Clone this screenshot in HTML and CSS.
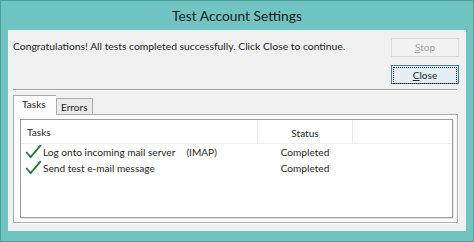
FILE: index.html
```html
<!DOCTYPE html>
<html>
<head>
<meta charset="utf-8">
<link rel="stylesheet" href="styles.css">
</head>
<body>
<div class="window">
  <div class="titlebar">Test Account Settings</div>
  <div class="client">
    <div class="top">
      <div class="message">Congratulations! All tests completed successfully. Click Close to continue.</div>
      <div class="buttons">
        <div class="btn disabled"><u>S</u>top</div>
        <div class="btn default"><span class="focus"><u>C</u>lose</span></div>
      </div>
    </div>
    <div class="separator"></div>
    <div class="tabs">
      <div class="tab selected">Tasks</div>
      <div class="tab">Errors</div>
    </div>
    <div class="panel">
      <div class="list">
        <div class="header">
          <div class="col c1">Tasks</div>
          <div class="col c2">Status</div>
          <div class="col c3"></div>
        </div>
        <div class="row">
          <div class="col c1">
            <svg class="check" width="17" height="15" viewBox="0 0 17 15"><path d="M1.2 8 L5.6 13.2 L15.8 1.2" fill="none" stroke="#27792f" stroke-width="1.8" stroke-linejoin="miter"/></svg>
            <span>Log onto incoming mail server</span><span class="proto">(IMAP)</span>
          </div>
          <div class="col c2">Completed</div>
        </div>
        <div class="row">
          <div class="col c1">
            <svg class="check" width="17" height="15" viewBox="0 0 17 15"><path d="M1.2 8 L5.6 13.2 L15.8 1.2" fill="none" stroke="#27792f" stroke-width="1.8" stroke-linejoin="miter"/></svg>
            <span>Send test e-mail message</span>
          </div>
          <div class="col c2">Completed</div>
        </div>
      </div>
    </div>
  </div>
</div>
</body>
</html>
```
FILE: styles.css
```css
html, body {
  margin: 0;
  padding: 0;
}
body {
  width: 474px;
  height: 242px;
  overflow: hidden;
  font-family: "Lato", "Noto Sans", sans-serif;
  font-size: 10.1px;
  color: #1e1e1e;
}
.window {
  box-sizing: border-box;
  width: 474px;
  height: 242px;
  background: #70c5c2;
  border: 1px solid #4f9e9b;
  padding: 0 7px 10px 7px;
  display: flex;
  flex-direction: column;
}
.titlebar {
  height: 29px;
  line-height: 30px;
  text-align: center;
  font-size: 13.8px;
  color: #1a1a1a;
}
.client {
  flex: 1;
  background: #f0f0f0;
  display: flex;
  flex-direction: column;
  padding: 0 0 0 5px;
}
.top {
  display: flex;
  justify-content: space-between;
  height: 58px;
}
.message {
  margin-top: 8px;
  line-height: 16px;
  font-size: 10.35px;
}
.buttons {
  margin-top: 8px;
  margin-right: 7px;
  display: flex;
  flex-direction: column;
  gap: 8px;
}
.btn {
  box-sizing: border-box;
  width: 68px;
  height: 19px;
  border: 1px solid #acacac;
  background: #e9e9e9;
  text-align: center;
  line-height: 17px;
  padding: 0;
}
.btn.disabled {
  color: #a3a3a3;
  border-color: #d9d9d9;
  background: #f2f2f2;
}
.btn.default {
  border-color: #3c7fb1;
  background: #e5eef6;
  padding: 1px;
}
.focus {
  display: block;
  height: 15px;
  line-height: 15px;
  border: 1px dotted #222;
  box-sizing: content-box;
  margin: 0;
}
.separator {
  height: 1px;
  background: #a0a0a0;
  border-bottom: 1px solid #ffffff;
  margin: 1px 9px 0 0;
}
.tabs {
  display: flex;
  align-items: flex-end;
  margin-top: 4px;
  height: 19px;
  position: relative;
  z-index: 1;
}
.tab {
  box-sizing: border-box;
  height: 16px;
  border: 1px solid #acacac;
  border-bottom: none;
  background: #eaeaea;
  padding: 0 4px 0 4px;
  line-height: 16px;
  width: 37px;
}
.tab.selected {
  height: 20px;
  margin-bottom: -1px;
  background: #fcfcfc;
  border-right: none;
  padding: 0 0 0 8px;
  line-height: 17px;
  width: 43px;
}
.panel {
  box-sizing: border-box;
  width: 445px;
  height: 109px;
  border: 1px solid #acacac;
  background: #fcfcfc;
  padding: 4px 4px 4px 6px;
  box-shadow: 1px 1px 0 #ffffff;
}
.list {
  box-sizing: border-box;
  height: 100%;
  border: 1px solid #9d9d9d;
  background: #ffffff;
  box-shadow: 1px 1px 0 #e3e3e3;
}
.header {
  display: flex;
  height: 23px;
  border-bottom: 1px solid #eeeeee;
}
.header .col {
  line-height: 26px;
  border-right: 1px solid #ececec;
}
.header .c3 {
  border-right: none;
}
.col.c1 {
  box-sizing: border-box;
  width: 237px;
  padding-left: 6px;
  display: flex;
  align-items: center;
}
.col.c2 {
  width: 94px;
  text-align: center;
}
.col.c3 {
  flex: 1;
}
.row {
  display: flex;
  height: 16px;
  line-height: 16px;
}
.row .c1 {
  padding-left: 4px;
}
.check {
  flex: none;
  margin-right: 1px;
  margin-top: -2px;
}
.proto {
  margin-left: 11px;
}
```
